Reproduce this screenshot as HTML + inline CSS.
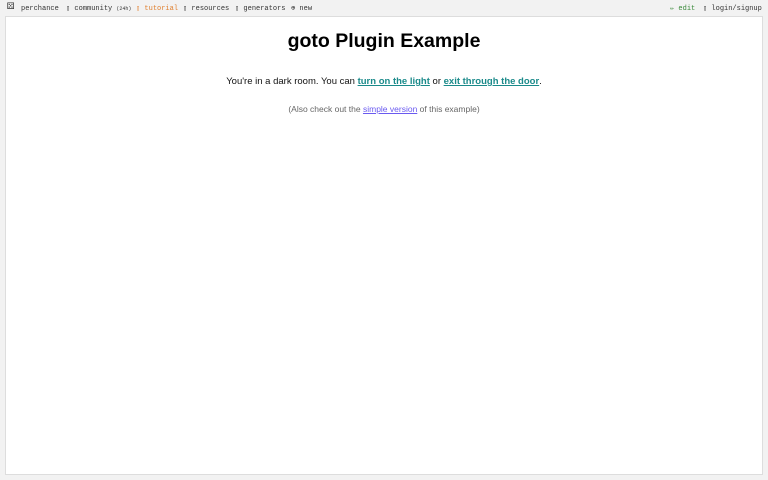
<!DOCTYPE html>
<html><head><style>
body{margin:0;width:768px;height:480px;background:#f2f2f2;font-family:"Liberation Sans",sans-serif;overflow:hidden;position:relative}
.bar{position:absolute;top:1px;left:0;right:0;height:16px;font-family:"Liberation Mono",monospace;font-size:7px;color:#333;line-height:16px}
.bar span{position:absolute;top:0;white-space:nowrap}
.main{position:absolute;left:5px;top:16px;width:756px;height:457px;background:#fff;border:1px solid #ddd}
h1{position:absolute;top:13px;left:0;width:100%;text-align:center;margin:0;font-size:19.5px;font-weight:bold}
p{position:absolute;left:0;width:100%;text-align:center;margin:0;white-space:nowrap}
a.g{color:#1a8a8a;font-weight:bold;text-decoration:underline}
a.b{color:#6a5af0;text-decoration:underline}
</style></head><body>
<div class="bar">
<span style="left:7px;font-size:12px;top:-3px">⚄</span>
<span style="left:21px">perchance</span>
<span style="left:66px">▯ community <small style="font-size:5px">(24h)</small></span>
<span style="left:136px;color:#e08030">▯ tutorial</span>
<span style="left:183px">▯ resources</span>
<span style="left:235px">▯ generators</span>
<span style="left:291px">⊕ new</span>
<span style="left:670px;color:#3a8a3a">✏ edit</span>
<span style="left:703px">▯ login/signup</span>
</div>
<div class="main">
<h1>goto Plugin Example</h1>
<p style="top:59px;font-size:9.5px;color:#111">You're in a dark room. You can <a class="g">turn on the light</a> or <a class="g">exit through the door</a>.</p>
<p style="top:87px;font-size:8.5px;color:#666">(Also check out the <a class="b">simple version</a> of this example)</p>
</div>
</body></html>
